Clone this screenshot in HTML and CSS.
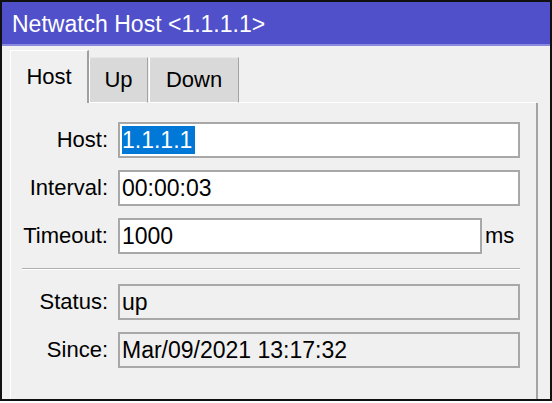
FILE: index.html
```html
<!DOCTYPE html>
<html>
<head>
<meta charset="utf-8">
<title>Netwatch Host</title>
<link rel="stylesheet" href="styles.css">
</head>
<body>
<div class="window">
  <div class="titlebar">Netwatch Host &lt;1.1.1.1&gt;</div>
  <div class="tabs">
    <div class="tab tab-active tab-host">Host</div>
    <div class="tab tab-up">Up</div>
    <div class="tab tab-down">Down</div>
    <div class="tab-fill"></div>
  </div>
  <div class="panel">
    <div class="form">
      <label class="label">Host:</label>
      <div class="field"><span class="selected">1.1.1.1</span></div>

      <label class="label">Interval:</label>
      <div class="field">00:00:03</div>

      <label class="label">Timeout:</label>
      <div class="field-unit">
        <div class="field">1000</div>
        <span class="unit">ms</span>
      </div>

      <div class="separator"></div>

      <label class="label">Status:</label>
      <div class="field field-ro">up</div>

      <label class="label">Since:</label>
      <div class="field field-ro">Mar/09/2021 13:17:32</div>
    </div>
  </div>
</div>
</body>
</html>
```

FILE: styles.css
```css
html, body {
  margin: 0;
  padding: 0;
  background: #ffffff;
}

.window {
  box-sizing: border-box;
  width: 552px;
  height: 401px;
  border: 2px solid #101010;
  background: #f0f0f0;
  display: flex;
  flex-direction: column;
  font-family: "Liberation Sans", Arial, sans-serif;
  color: #000000;
  overflow: hidden;
}

.titlebar {
  box-sizing: border-box;
  height: 44px;
  padding: 3px 0 0 10px;
  background: #5050cb;
  border-bottom: 2px solid #8a8ade;
  color: #ffffff;
  font-size: 23px;
  line-height: 39px;
  white-space: nowrap;
}

.tabs {
  display: flex;
  align-items: flex-end;
  margin: 4px 12px 0 8px;
  height: 53px;
}

.tab {
  box-sizing: border-box;
  text-align: center;
  font-size: 22px;
  white-space: nowrap;
}

.tab-active {
  height: 53px;
  line-height: 52px;
  background: #f0f0f0;
  border-left: 1px solid #ffffff;
  border-top: 1px solid #ffffff;
  border-right: 2px solid #a0a0a0;
}

.tab-up,
.tab-down {
  height: 46px;
  line-height: 44px;
  background: #d9d9d9;
  border-left: 1px solid #ffffff;
  border-top: 1px solid #e8e8e8;
  border-right: 1px solid #a3a3a3;
  border-bottom: 1px solid #ffffff;
}

.tab-host { width: 79px; }
.tab-up { width: 59px; }
.tab-down { width: 90px; margin-left: 1px; }

.tab-fill {
  flex: 1;
  border-bottom: 1px solid #ffffff;
  margin-right: 2px;
}

.panel {
  flex: 1;
  box-sizing: border-box;
  width: 528px;
  margin-left: 8px;
  padding: 19px 16px 0 0;
  border-left: 1px solid #ffffff;
  border-right: 2px solid #a4a4a4;
}

.form {
  display: grid;
  grid-template-columns: 97px 1fr;
  column-gap: 10px;
  row-gap: 12px;
  align-items: center;
}

.label {
  text-align: right;
  font-size: 22px;
  white-space: nowrap;
}

.field {
  box-sizing: border-box;
  height: 36px;
  padding: 0 2px;
  border: 2px solid #a8a8a8;
  background: #ffffff;
  font-size: 23px;
  line-height: 32px;
  white-space: nowrap;
  overflow: hidden;
}

.field-ro {
  background: #f0f0f0;
}

.selected {
  display: inline-block;
  padding-right: 3px;
  line-height: 28px;
  background: #0078d7;
  color: #ffffff;
}

.field-unit {
  display: flex;
  align-items: center;
  gap: 3px;
}

.field-unit .field {
  flex: 1;
}

.unit {
  width: 35px;
  font-size: 22px;
}

.separator {
  grid-column: 1 / 3;
  margin: 2px 0 2px 11px;
  height: 0;
  border-top: 1px solid #b0b0b0;
  border-bottom: 1px solid #ffffff;
}
```
